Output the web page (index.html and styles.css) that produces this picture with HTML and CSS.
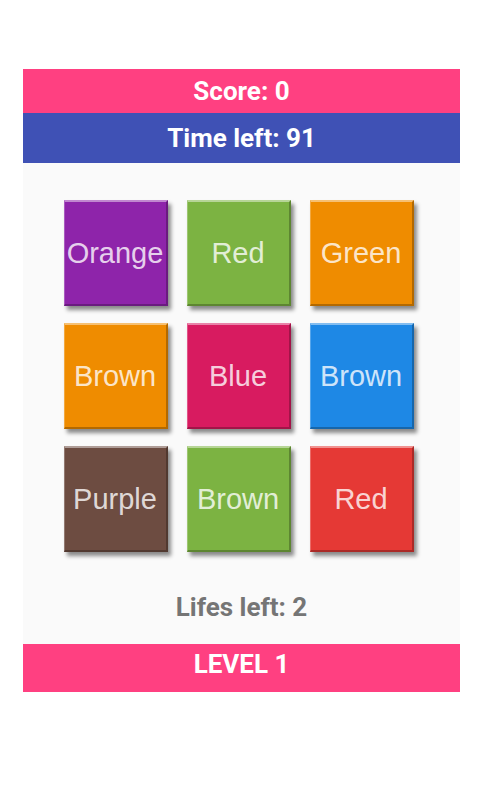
FILE: index.html
```html
<!DOCTYPE html>
<html lang="en">
<head>
    <meta charset="UTF-8">
    <meta name="viewport" content="width=device-width, initial-scale=1.0">
    <title>Color Game</title>
    <link rel="stylesheet" href="styles.css">
</head>
<body>
    <div class="game">
        <div class="bar score">Score: 0</div>
        <div class="bar timer">Time left: 91</div>

        <div class="board">
            <div class="grid">
                <div class="tile purple">Orange</div>
                <div class="tile green">Red</div>
                <div class="tile orange">Green</div>
                <div class="tile orange">Brown</div>
                <div class="tile crimson">Blue</div>
                <div class="tile blue">Brown</div>
                <div class="tile brown">Purple</div>
                <div class="tile green">Brown</div>
                <div class="tile red">Red</div>
            </div>
            <div class="lives">Lifes left: 2</div>
        </div>

        <div class="bar level">LEVEL 1</div>
    </div>
</body>
</html>
```

FILE: styles.css
```css
body {
    margin: 0;
    padding: 0;
    background-color: #ffffff;
    font-family: Roboto, "Liberation Sans", Arial, sans-serif;
}

.game {
    width: 437px;
    margin: 69px 0 0 23px;
    background-color: #fafafa;
}

.bar {
    color: #ffffff;
    font-weight: bold;
    font-size: 26px;
    text-align: center;
}

.score {
    background-color: #ff4081;
    height: 44px;
    line-height: 44px;
}

.timer {
    background-color: #3f51b5;
    height: 50px;
    line-height: 50px;
}

.level {
    background-color: #ff4081;
    height: 48px;
    line-height: 40px;
}

.board {
    padding: 37px 0 0;
    height: 444px;
}

.grid {
    display: grid;
    grid-template-columns: repeat(3, 104px);
    grid-auto-rows: 106px;
    column-gap: 19px;
    row-gap: 17px;
    justify-content: center;
    margin-left: -6px;
}

.tile {
    display: flex;
    align-items: center;
    justify-content: center;
    font-family: "Liberation Sans", Arial, sans-serif;
    font-size: 29px;
    color: rgba(255, 255, 255, 0.8);
    border-top: 2px solid rgba(255, 255, 255, 0.45);
    border-left: 1px solid rgba(255, 255, 255, 0.25);
    border-right: 2px solid rgba(0, 0, 0, 0.25);
    border-bottom: 2px solid rgba(0, 0, 0, 0.25);
    box-shadow: 3px 4px 4px rgba(0, 0, 0, 0.45);
    box-sizing: border-box;
}

.purple { background-color: #8e24aa; }
.green { background-color: #7cb342; }
.orange { background-color: #ef8c00; }
.crimson { background-color: #d81b60; }
.blue { background-color: #1e88e5; }
.brown { background-color: #6d4c41; }
.red { background-color: #e53935; }

.lives {
    margin-top: 40px;
    text-align: center;
    font-weight: bold;
    font-size: 26px;
    color: #757575;
}
```
